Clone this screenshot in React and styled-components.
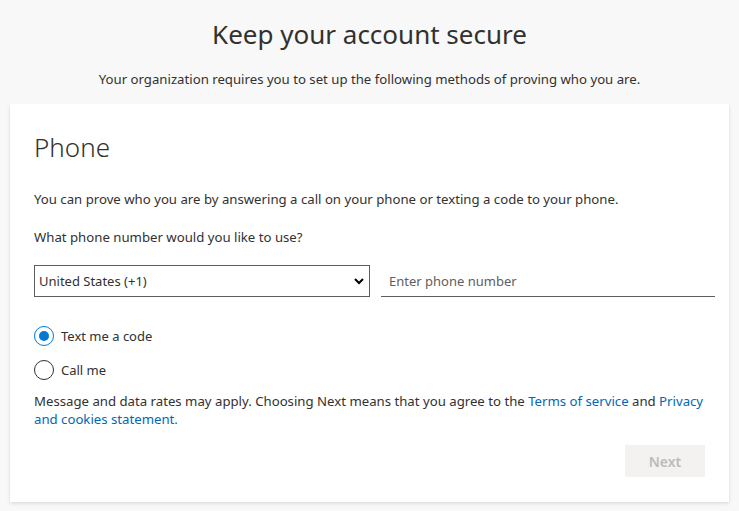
import React from "react";
import styled, { createGlobalStyle } from "styled-components";

const Global = createGlobalStyle`
  html, body { margin: 0; padding: 0; background: #f8f8f8; }
  body { font-family: "Noto Sans", "Open Sans", sans-serif; color: #323130; }
  * { box-sizing: border-box; }
`;

const Page = styled.div`
  width: 739px;
  min-height: 511px;
  padding: 0 10px;
  display: flex;
  flex-direction: column;
  align-items: stretch;
`;

const Title = styled.h1`
  margin: 15px 0 0;
  text-align: center;
  font-size: 26px;
  font-weight: 400;
  line-height: 38px;
  color: #323130;
`;

const Subtitle = styled.p`
  margin: 16px 0 0;
  text-align: center;
  font-size: 13.2px;
  line-height: 20px;
`;

const Card = styled.section`
  margin-top: 15px;
  background: #fff;
  box-shadow: 0 1.6px 3.6px rgba(0,0,0,0.13), 0 0.3px 0.9px rgba(0,0,0,0.11);
  padding: 24px 14px 25px 24px;
  display: flex;
  flex-direction: column;
`;

const Heading = styled.h2`
  margin: 0;
  font-size: 26px;
  font-weight: 300;
  line-height: 38px;
  color: #323130;
`;

const Text = styled.p`
  margin: ${(p) => p.$mt || 0}px 0 0;
  font-size: 13.2px;
  line-height: 18px;
`;

const Link = styled.a`
  color: #0067b8;
  text-decoration: none;
`;

const InputRow = styled.div`
  margin-top: 19px;
  display: grid;
  grid-template-columns: 336px 1fr;
  gap: 11px;
`;

const Select = styled.div`
  height: 32px;
  border: 1px solid #605e5c;
  display: flex;
  align-items: center;
  justify-content: space-between;
  padding: 0 4px 0 4px;
  font-size: 13px;
  color: #323130;
`;

const PhoneInput = styled.div`
  height: 32px;
  border-bottom: 1px solid #605e5c;
  display: flex;
  align-items: center;
  padding: 0 8px;
  font-size: 13px;
  color: #605e5c;
`;

const Radios = styled.div`
  margin-top: 29px;
  display: flex;
  flex-direction: column;
  gap: 14px;
`;

const RadioRow = styled.label`
  display: flex;
  align-items: center;
  gap: 7px;
  font-size: 13px;
  line-height: 20px;
`;

const Circle = styled.span`
  width: 20px;
  height: 20px;
  border-radius: 50%;
  border: 1px solid ${(p) => (p.$checked ? "#0078d4" : "#323130")};
  display: flex;
  align-items: center;
  justify-content: center;
  &::after {
    content: "";
    width: 10px;
    height: 10px;
    border-radius: 50%;
    background: ${(p) => (p.$checked ? "#0078d4" : "transparent")};
  }
`;

const Footer = styled.div`
  margin-top: 17px;
  padding-right: 10px;
  display: flex;
  justify-content: flex-end;
`;

const NextButton = styled.button`
  width: 80px;
  height: 32px;
  border: none;
  background: #f3f2f1;
  color: #bdbbb9;
  font-family: inherit;
  font-size: 14px;
  font-weight: 600;
`;

const Chevron = () => (
  <svg width="12" height="12" viewBox="0 0 12 12">
    <path d="M2 4 L6 8 L10 4" fill="none" stroke="#000" strokeWidth="2" />
  </svg>
);

export default function App() {
  return (
    <Page>
      <Global />
      <Title>Keep your account secure</Title>
      <Subtitle>Your organization requires you to set up the following methods of proving who you are.</Subtitle>
      <Card>
        <Heading>Phone</Heading>
        <Text $mt={24}>You can prove who you are by answering a call on your phone or texting a code to your phone.</Text>
        <Text $mt={20}>What phone number would you like to use?</Text>
        <InputRow>
          <Select>
            <span>United States (+1)</span>
            <Chevron />
          </Select>
          <PhoneInput>Enter phone number</PhoneInput>
        </InputRow>
        <Radios>
          <RadioRow><Circle $checked />Text me a code</RadioRow>
          <RadioRow><Circle />Call me</RadioRow>
        </Radios>
        <Text $mt={12}>
          Message and data rates may apply. Choosing Next means that you agree to the{" "}
          <Link href="#">Terms of service</Link> and <Link href="#">Privacy and cookies statement.</Link>
        </Text>
        <Footer>
          <NextButton disabled>Next</NextButton>
        </Footer>
      </Card>
    </Page>
  );
}
